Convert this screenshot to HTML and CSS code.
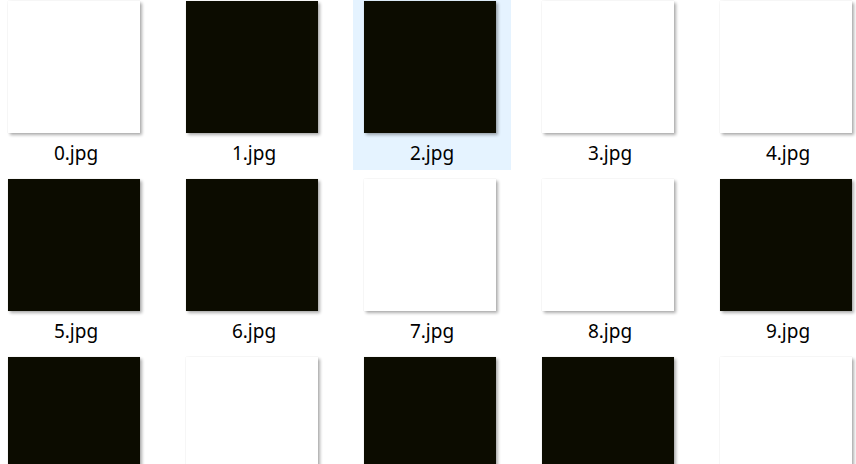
FILE: index.html
```html
<!DOCTYPE html>
<html>
<head>
<meta charset="utf-8">
<link rel="stylesheet" href="styles.css">
</head>
<body>
<div class="grid">
  <div class="item"><div class="thumb white"></div><div class="label">0.jpg</div></div>
  <div class="item"><div class="thumb dark"></div><div class="label">1.jpg</div></div>
  <div class="item selected"><div class="thumb dark"></div><div class="label">2.jpg</div></div>
  <div class="item"><div class="thumb white"></div><div class="label">3.jpg</div></div>
  <div class="item"><div class="thumb white"></div><div class="label">4.jpg</div></div>
  <div class="item"><div class="thumb dark"></div><div class="label">5.jpg</div></div>
  <div class="item"><div class="thumb dark"></div><div class="label">6.jpg</div></div>
  <div class="item"><div class="thumb white"></div><div class="label">7.jpg</div></div>
  <div class="item"><div class="thumb white"></div><div class="label">8.jpg</div></div>
  <div class="item"><div class="thumb dark"></div><div class="label">9.jpg</div></div>
  <div class="item"><div class="thumb dark"></div></div>
  <div class="item"><div class="thumb white"></div></div>
  <div class="item"><div class="thumb dark"></div></div>
  <div class="item"><div class="thumb dark"></div></div>
  <div class="item"><div class="thumb white"></div></div>
</div>
</body>
</html>
```
FILE: styles.css
```css
html, body {
  margin: 0;
  padding: 0;
  background: #ffffff;
  overflow: hidden;
  width: 856px;
  height: 464px;
}
.grid {
  display: grid;
  grid-template-columns: repeat(5, 158px);
  column-gap: 20px;
  row-gap: 5px;
  margin-left: -3px;
  margin-top: -3px;
}
.item {
  display: flex;
  flex-direction: column;
  align-items: center;
  padding: 4px 0 5px 0;
}
.item.selected {
  background: #e5f3ff;
}
.thumb {
  width: 132px;
  height: 132px;
  margin-right: 4px;
  margin-bottom: 8px;
  box-shadow: 0 0 1px rgba(0, 0, 0, 0.12), 2px 2px 3px rgba(0, 0, 0, 0.32);
}
.thumb.white { background: #ffffff; }
.thumb.dark { background: #0c0c00; }
.label {
  font-family: "Noto Sans", "Open Sans", sans-serif;
  font-size: 19px;
  line-height: 24px;
  color: #000000;
  text-align: center;
}
```
